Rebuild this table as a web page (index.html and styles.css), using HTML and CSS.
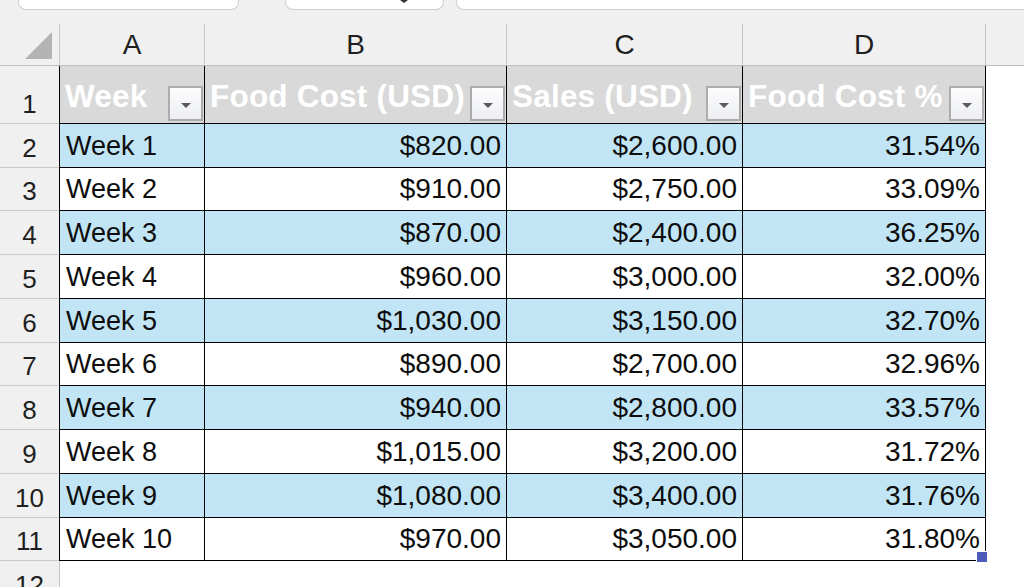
FILE: index.html
```html
<!DOCTYPE html>
<html>
<head>
<meta charset="utf-8">
<link rel="stylesheet" href="styles.css">
</head>
<body>
<div class="topbar">
  <div class="box box1"></div>
  <div class="box box2"><svg class="caret" width="8" height="3" viewBox="0 0 8 3"><path d="M0 0 H8 L4 3 Z" fill="#333"/></svg></div>
  <div class="box box3"></div>
</div>
<div class="sheet">
  <div class="ch corner"><svg width="28" height="28" viewBox="0 0 28 28"><path d="M27 0 V27 H0 Z" fill="#b3b3b3"/></svg></div>
  <div class="ch first">A</div>
  <div class="ch">B</div>
  <div class="ch">C</div>
  <div class="ch">D</div>
  <div class="ch rest"></div>

  <div class="rh">1</div>
  <div class="hd first"><span class="hd-t">Week</span><span class="flt"></span></div>
  <div class="hd"><span class="hd-t">Food Cost (USD)</span><span class="flt"></span></div>
  <div class="hd"><span class="hd-t">Sales (USD)</span><span class="flt"></span></div>
  <div class="hd"><span class="hd-t">Food Cost %</span><span class="flt"></span></div>
  <div class="empty"></div>

  <div class="rh">2</div>
  <div class="c txt first band">Week 1</div><div class="c num band">$820.00</div><div class="c num band">$2,600.00</div><div class="c num band">31.54%</div><div class="empty"></div>
  <div class="rh">3</div>
  <div class="c txt first">Week 2</div><div class="c num">$910.00</div><div class="c num">$2,750.00</div><div class="c num">33.09%</div><div class="empty"></div>
  <div class="rh">4</div>
  <div class="c txt first band">Week 3</div><div class="c num band">$870.00</div><div class="c num band">$2,400.00</div><div class="c num band">36.25%</div><div class="empty"></div>
  <div class="rh">5</div>
  <div class="c txt first">Week 4</div><div class="c num">$960.00</div><div class="c num">$3,000.00</div><div class="c num">32.00%</div><div class="empty"></div>
  <div class="rh">6</div>
  <div class="c txt first band">Week 5</div><div class="c num band">$1,030.00</div><div class="c num band">$3,150.00</div><div class="c num band">32.70%</div><div class="empty"></div>
  <div class="rh">7</div>
  <div class="c txt first">Week 6</div><div class="c num">$890.00</div><div class="c num">$2,700.00</div><div class="c num">32.96%</div><div class="empty"></div>
  <div class="rh">8</div>
  <div class="c txt first band">Week 7</div><div class="c num band">$940.00</div><div class="c num band">$2,800.00</div><div class="c num band">33.57%</div><div class="empty"></div>
  <div class="rh">9</div>
  <div class="c txt first">Week 8</div><div class="c num">$1,015.00</div><div class="c num">$3,200.00</div><div class="c num">31.72%</div><div class="empty"></div>
  <div class="rh">10</div>
  <div class="c txt first band">Week 9</div><div class="c num band">$1,080.00</div><div class="c num band">$3,400.00</div><div class="c num band">31.76%</div><div class="empty"></div>
  <div class="rh">11</div>
  <div class="c txt first">Week 10</div><div class="c num">$970.00</div><div class="c num">$3,050.00</div><div class="c num last">31.80%</div><div class="empty"></div>

  <div class="rh">12</div>
  <div class="tail"></div>
</div>
</body>
</html>
```
FILE: styles.css
```css
* { box-sizing: border-box; }
html, body { margin: 0; padding: 0; }
body {
  width: 1024px;
  height: 587px;
  overflow: hidden;
  background: #ffffff;
  font-family: "Liberation Sans", Arial, sans-serif;
}

.topbar {
  height: 24px;
  background: #f0f0f0;
  display: flex;
  align-items: flex-start;
  padding-left: 18px;
  overflow: hidden;
}
.box {
  height: 10px;
  background: #ffffff;
  border: 1px solid #cdcdcd;
  border-top: none;
  border-radius: 0 0 8px 8px;
}
.box1 { width: 221px; }
.box2 {
  width: 159px;
  margin-left: 46px;
  display: flex;
  justify-content: flex-end;
  align-items: flex-start;
  padding-right: 35px;
}
.caret { display: block; }
.box3 {
  flex: 1;
  margin-left: 12px;
  margin-right: -20px;
}

.sheet {
  display: grid;
  grid-template-columns: 59px 146px 302px 236px 243px 1fr;
  grid-template-rows: 42px 58px 44px 43px 44px 44px 44px 43px 44px 44px 44px 43px 44px;
}

/* column headers */
.ch {
  background: #f0f0f0;
  border-bottom: 1px solid #bfbfbf;
  border-right: 1px solid #c4c4c4;
  display: flex;
  align-items: center;
  justify-content: center;
  font-size: 28px;
  color: #1f1f1f;
}
.ch.first { border-left: 1px solid #c4c4c4; }
.ch.corner {
  border-right: none;
  justify-content: flex-start;
  align-items: flex-start;
  padding: 8px 0 0 25px;
}
.ch.corner svg { display: block; }
.ch.rest { border-right: none; }

/* row headers */
.rh {
  grid-column: 1;
  background: #f0f0f0;
  border-bottom: 1px solid #c9c9c9;
  display: flex;
  align-items: flex-end;
  justify-content: center;
  padding-bottom: 6px;
  font-size: 26px;
  line-height: 1;
  color: #1f1f1f;
}

/* table header row */
.hd {
  background: #d9d9d9;
  border-right: 1px solid #000;
  border-bottom: 1px solid #000;
  display: flex;
  align-items: flex-end;
  padding: 0 1px 2px 5px;
}
.hd.first { border-left: 1px solid #000; }
.hd-t {
  font-weight: bold;
  font-size: 31.5px;
  letter-spacing: 0.2px;
  line-height: 1;
  color: #ffffff;
  white-space: nowrap;
  margin-bottom: 9px;
}
.flt {
  margin-left: auto;
  width: 35px;
  height: 35px;
  flex: none;
  border: 2px solid #acacac;
  background: linear-gradient(#fdfdfe, #eceef2);
  display: flex;
  align-items: center;
  justify-content: center;
  padding-top: 3px;
}
.flt::after {
  content: "";
  width: 0;
  height: 0;
  border-top: 5px solid #5a5a5a;
  border-left: 5px solid transparent;
  border-right: 5px solid transparent;
}

/* data cells */
.c {
  background: #ffffff;
  border-right: 1px solid #000;
  border-bottom: 1px solid #000;
  display: flex;
  align-items: flex-end;
  padding-bottom: 7px;
  line-height: 1;
  color: #0d0d0d;
  white-space: nowrap;
}
.c.first { border-left: 1px solid #000; }
.c.band { background: #c1e5f5; }
.txt {
  font-size: 27px;
  padding-left: 6px;
}
.num {
  font-size: 28px;
  justify-content: flex-end;
  padding-right: 5px;
}
.c.last { position: relative; }
.c.last::after {
  content: "";
  position: absolute;
  right: -2px;
  bottom: -2px;
  width: 10px;
  height: 10px;
  background: #4a5bb8;
  border-left: 1px solid #ffffff;
  border-top: 1px solid #ffffff;
}

.empty { background: #ffffff; }
.tail {
  grid-column: 2 / 7;
  background: #ffffff;
  border-left: 1px solid #c4c4c4;
}
```
